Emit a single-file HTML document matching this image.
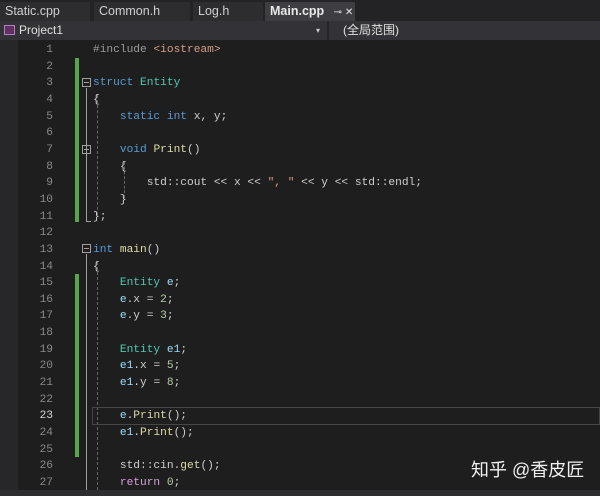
<!DOCTYPE html>
<html><head><meta charset="utf-8">
<style>
*{margin:0;padding:0;box-sizing:border-box}
body{width:600px;height:496px;overflow:hidden;background:#1e1e1e;position:relative;font-family:"Liberation Sans","Noto Sans CJK SC",sans-serif}
.tabs{position:absolute;left:0;top:0;width:600px;height:21px;background:#232325}
.tab{position:absolute;top:2px;height:19px;background:#2d2d30;color:#d0d0d0;font-size:12.5px;line-height:19px;padding-left:5px}
.nav{position:absolute;left:0;top:21px;width:600px;height:19px;background:#333337;color:#e0e0e0;font-size:12px;line-height:19px}
.gut{position:absolute;left:0;top:40px;width:18px;height:450px;background:#27272a}
.ln{position:absolute;left:20px;width:33px;text-align:right;color:#8a8a8a;font-family:"Liberation Mono",monospace;font-size:11.2px;height:16.65px;line-height:16.65px;margin-top:1.5px}
.cd{position:absolute;left:93px;white-space:pre;color:#d0d0d0;font-family:"Liberation Mono","Noto Sans CJK SC",monospace;font-size:11.2px;height:16.65px;line-height:16.65px;margin-top:1.5px}
.k{color:#569cd6}.t{color:#4ec9b0}.f{color:#dcdcaa}.p{color:#9b9b9b}.s{color:#d69d85}.v{color:#9cdcfe}.r{color:#d8a0df}.n{color:#b5cea8}
.green{position:absolute;left:75px;width:4px;background:#57a64a}
.box{position:absolute;left:82px;width:9px;height:9px;border:1px solid #a0a0a0}
.box:after{content:"";position:absolute;left:1px;top:3px;width:5px;height:1px;background:#a0a0a0}
.vl{position:absolute;width:1px;background:#a0a0a0}
.dl{position:absolute;width:0;border-left:1px dashed #666}
</style></head><body>
<div class="tabs">
<div class="tab" style="left:0;width:90px">Static.cpp</div>
<div class="tab" style="left:94px;width:96px">Common.h</div>
<div class="tab" style="left:193px;width:70px">Log.h</div>
<div class="tab" style="left:265px;width:90px;background:#3e3e42;color:#e8e8e8;font-weight:bold">Main.cpp <span style="font-weight:normal;font-size:10px;margin-left:6px">⊸ ✕</span></div>
</div>
<div class="nav">
<span style="position:absolute;left:4px;top:4px;width:11px;height:10px;border:1px solid #b080c0;background:#603060"></span>
<span style="position:absolute;left:19px">Project1</span>
<span style="position:absolute;left:316px;font-size:8px;color:#ccc">▾</span>
<span style="position:absolute;left:327px;width:2px;height:19px;background:#252526"></span>
<span style="position:absolute;left:343px">(全局范围)</span>
</div>
<div class="gut"></div>
<div class="green" style="top:58px;height:164px"></div>
<div class="green" style="top:274px;height:183px"></div>
<div class="box" style="top:78px"></div>
<div class="box" style="top:145px"></div>
<div class="box" style="top:244px"></div>
<div class="vl" style="left:86px;top:88px;height:134px"></div>
<div style="position:absolute;left:86px;top:221px;width:5px;height:1px;background:#a0a0a0"></div>
<div class="vl" style="left:86px;top:254px;height:236px"></div>
<div class="dl" style="left:97px;top:95px;height:120px"></div>
<div class="dl" style="left:124px;top:162px;height:36px"></div>
<div class="dl" style="left:97px;top:262px;height:228px"></div>
<div style="position:absolute;left:92px;top:407px;width:508px;height:18px;border:1px solid #464646"></div>
<div class="ln" style="top:40.5px">1</div><div class="cd" style="top:40.5px"><span class="p">#include</span> <span class="s">&lt;iostream&gt;</span></div>
<div class="ln" style="top:57.2px">2</div>
<div class="ln" style="top:73.8px">3</div><div class="cd" style="top:73.8px"><span class="k">struct</span> <span class="t">Entity</span></div>
<div class="ln" style="top:90.5px">4</div><div class="cd" style="top:90.5px">{</div>
<div class="ln" style="top:107.1px">5</div><div class="cd" style="top:107.1px">    <span class="k">static</span> <span class="k">int</span> x, y;</div>
<div class="ln" style="top:123.8px">6</div>
<div class="ln" style="top:140.4px">7</div><div class="cd" style="top:140.4px">    <span class="k">void</span> <span class="f">Print</span>()</div>
<div class="ln" style="top:157.1px">8</div><div class="cd" style="top:157.1px">    {</div>
<div class="ln" style="top:173.7px">9</div><div class="cd" style="top:173.7px">        std::cout &lt;&lt; x &lt;&lt; <span class="s">", "</span> &lt;&lt; y &lt;&lt; std::endl;</div>
<div class="ln" style="top:190.4px">10</div><div class="cd" style="top:190.4px">    }</div>
<div class="ln" style="top:207px">11</div><div class="cd" style="top:207px">};</div>
<div class="ln" style="top:223.7px">12</div>
<div class="ln" style="top:240.3px">13</div><div class="cd" style="top:240.3px"><span class="k">int</span> <span class="f">main</span>()</div>
<div class="ln" style="top:257px">14</div><div class="cd" style="top:257px">{</div>
<div class="ln" style="top:273.6px">15</div><div class="cd" style="top:273.6px">    <span class="t">Entity</span> <span class="v">e</span>;</div>
<div class="ln" style="top:290.3px">16</div><div class="cd" style="top:290.3px">    <span class="v">e</span>.x = <span class="n">2</span>;</div>
<div class="ln" style="top:306.9px">17</div><div class="cd" style="top:306.9px">    <span class="v">e</span>.y = <span class="n">3</span>;</div>
<div class="ln" style="top:323.6px">18</div>
<div class="ln" style="top:340.2px">19</div><div class="cd" style="top:340.2px">    <span class="t">Entity</span> <span class="v">e1</span>;</div>
<div class="ln" style="top:356.9px">20</div><div class="cd" style="top:356.9px">    <span class="v">e1</span>.x = <span class="n">5</span>;</div>
<div class="ln" style="top:373.5px">21</div><div class="cd" style="top:373.5px">    <span class="v">e1</span>.y = <span class="n">8</span>;</div>
<div class="ln" style="top:390.2px">22</div>
<div class="ln" style="top:406.8px;color:#d8d8d8">23</div><div class="cd" style="top:406.8px">    <span class="v">e</span>.<span class="f">Print</span>();</div>
<div class="ln" style="top:423.5px">24</div><div class="cd" style="top:423.5px">    <span class="v">e1</span>.<span class="f">Print</span>();</div>
<div class="ln" style="top:440.1px">25</div>
<div class="ln" style="top:456.8px">26</div><div class="cd" style="top:456.8px">    std::cin.<span class="f">get</span>();</div>
<div class="ln" style="top:473.4px">27</div><div class="cd" style="top:473.4px">    <span class="r">return</span> <span class="n">0</span>;</div>
<div style="position:absolute;left:471px;top:456px;color:#f0f0f0;font-size:18px;font-family:'Liberation Sans','Noto Sans CJK SC',sans-serif">知乎 @香皮匠</div>
<div style="position:absolute;left:0;top:490px;width:600px;height:6px;background:#2d2d30"></div>
</body></html>
